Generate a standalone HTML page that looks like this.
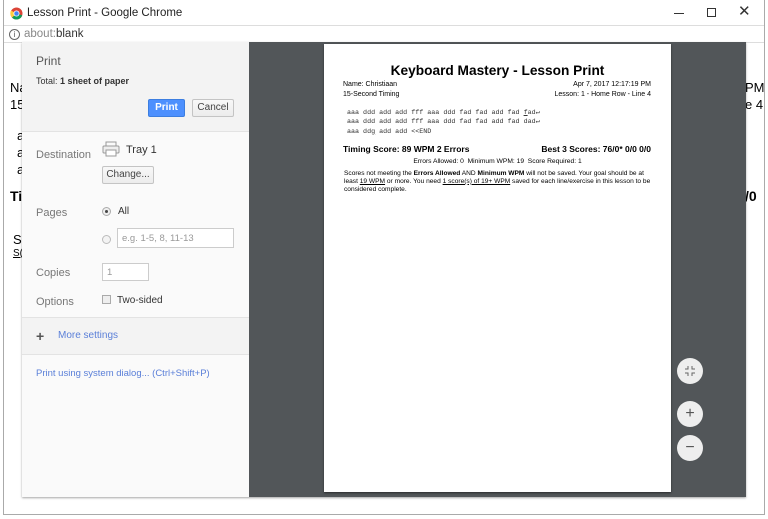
<!DOCTYPE html>
<html><head><style>
*{margin:0;padding:0;box-sizing:border-box}
body{width:768px;height:519px;background:#fff;font-family:"Liberation Sans",sans-serif;position:relative;overflow:hidden}
.abs{position:absolute}
.win{left:3px;top:0;width:762px;height:515px;border:1px solid #aaa;border-top:none;background:#fff}
.t{color:#333;font-size:12px}
.lbl{color:#777;font-size:11px}
.btn{border:1px solid #c4c4c4;border-radius:2px;background:linear-gradient(#f8f8f8,#ececec);font-size:11px;color:#444;text-align:center}
.pg{font-size:7px;color:#000}
.mono{font-family:"Liberation Mono",monospace;font-size:7px;color:#333}
.zb{width:26px;height:26px;border-radius:13px;background:#eee;color:#555;text-align:center;font-size:16px;line-height:25px}
</style></head><body>
<div class="abs win"></div>
<div class="abs" style="left:4px;top:0;width:760px;height:26px;border-bottom:1px solid #ddd;background:#fff"></div>
<svg class="abs" style="left:10px;top:7px" width="13" height="13" viewBox="0 0 26 26"><circle cx="13" cy="13" r="12" fill="#db4437"/><path d="M13 13 L24.4 16.5 A12 12 0 0 1 4 21 Z" fill="#0f9d58"/><path d="M13 13 L4 21 A12 12 0 0 1 2 7 Z" fill="#ffcd40"/><circle cx="13" cy="13" r="6" fill="#fff"/><circle cx="13" cy="13" r="4.5" fill="#4285f4"/></svg>
<div class="abs" style="left:27px;top:7px;font-size:11.5px;color:#222">Lesson Print - Google Chrome</div>
<div class="abs" style="left:674px;top:13px;width:10px;height:1px;background:#333"></div>
<div class="abs" style="left:707px;top:8px;width:9px;height:9px;border:1px solid #333"></div>
<div class="abs" style="left:738px;top:2px;font-size:15px;color:#333">✕</div>
<div class="abs" style="left:4px;top:27px;width:760px;height:16px;border-bottom:1px solid #ddd"></div>
<div class="abs" style="left:9px;top:29px;width:11px;height:11px;border:1px solid #666;border-radius:6px;font-size:8px;text-align:center;line-height:9px;color:#555">i</div>
<div class="abs" style="left:24px;top:28px;font-size:11.5px;color:#888">about:<span style="color:#333">blank</span></div>
<div class="abs" style="left:10px;top:80px;font-size:13px;color:#000">Na</div>
<div class="abs" style="left:10px;top:97px;font-size:13px;color:#000">15</div>
<div class="abs" style="left:17px;top:128px;font-size:13px;color:#000">a</div>
<div class="abs" style="left:17px;top:145px;font-size:13px;color:#000">a</div>
<div class="abs" style="left:17px;top:162px;font-size:13px;color:#000">a</div>
<div class="abs" style="left:10px;top:188px;font-size:14px;font-weight:bold;color:#000">Ti</div>
<div class="abs" style="left:13px;top:232px;font-size:13px;color:#000">S</div>
<div class="abs" style="left:13px;top:248px;font-size:10px;color:#000;text-decoration:underline">S(</div>
<div class="abs" style="left:745px;top:80px;font-size:13px;color:#000">PM</div>
<div class="abs" style="left:745px;top:97px;font-size:13px;color:#000">e 4</div>
<div class="abs" style="left:745px;top:188px;font-size:14px;font-weight:bold;color:#000">/0</div>
<div class="abs" style="left:22px;top:42px;width:724px;height:455px;box-shadow:0 1px 2px rgba(0,0,0,.35);background:#fafafa"></div>
<div class="abs" style="left:22px;top:42px;width:227px;height:90px;background:#f3f3f3;border-bottom:1px solid #e3e3e3"></div>
<div class="abs" style="left:36px;top:54px;font-size:12px;color:#555">Print</div>
<div class="abs" style="left:36px;top:76px;font-size:9px;color:#333">Total: <b>1 sheet of paper</b></div>
<div class="abs" style="left:148px;top:99px;width:37px;height:18px;border:1px solid #3c7ee0;border-radius:2px;background:#4d90fe;color:#fff;font-size:10px;font-weight:bold;text-align:center;line-height:16px">Print</div>
<div class="abs btn" style="left:192px;top:99px;width:42px;height:18px;line-height:16px;font-size:10px">Cancel</div>
<div class="abs lbl" style="left:36px;top:149px">Destination</div>
<svg class="abs" style="left:102px;top:141px" width="18" height="16" viewBox="0 0 18 16"><rect x="4" y="1" width="10" height="4" fill="none" stroke="#999"/><rect x="1" y="5" width="16" height="7" rx="1" fill="#eee" stroke="#999"/><rect x="4" y="9" width="10" height="6" fill="#fff" stroke="#999"/></svg>
<div class="abs t" style="left:126px;top:144px;font-size:11px">Tray 1</div>
<div class="abs btn" style="left:102px;top:166px;width:52px;height:18px;line-height:16px;font-size:10px">Change...</div>
<div class="abs lbl" style="left:36px;top:207px">Pages</div>
<div class="abs" style="left:102px;top:207px;width:9px;height:9px;border:1px solid #aaa;border-radius:5px;background:#eee"></div>
<div class="abs" style="left:105px;top:210px;width:3px;height:3px;border-radius:2px;background:#444"></div>
<div class="abs t" style="left:118px;top:206px;font-size:10px">All</div>
<div class="abs" style="left:102px;top:235px;width:9px;height:9px;border:1px solid #bbb;border-radius:5px;background:#f3f3f3"></div>
<div class="abs" style="left:117px;top:228px;width:117px;height:20px;border:1px solid #ccc;background:#fff;font-size:9.5px;color:#999;padding:4px 0 0 4px">e.g. 1-5, 8, 11-13</div>
<div class="abs lbl" style="left:36px;top:267px">Copies</div>
<div class="abs" style="left:102px;top:263px;width:47px;height:18px;border:1px solid #ccc;background:#fff;font-size:9.5px;color:#999;padding:3px 0 0 4px">1</div>
<div class="abs lbl" style="left:36px;top:296px">Options</div>
<div class="abs" style="left:102px;top:295px;width:9px;height:9px;border:1px solid #aaa;background:#eee"></div>
<div class="abs t" style="left:117px;top:295px;font-size:10px">Two-sided</div>
<div class="abs" style="left:22px;top:317px;width:227px;height:38px;background:#f3f3f3;border-top:1px solid #e3e3e3;border-bottom:1px solid #e3e3e3"></div>
<div class="abs" style="left:36px;top:328px;font-size:14px;font-weight:bold;color:#555">+</div>
<div class="abs" style="left:58px;top:330px;font-size:10px;color:#5a7fd8">More settings</div>
<div class="abs" style="left:36px;top:368px;font-size:9.5px;color:#5a7fd8">Print using system dialog... (Ctrl+Shift+P)</div>
<div class="abs" style="left:249px;top:42px;width:497px;height:455px;background:#525659"></div>
<div class="abs" style="left:324px;top:44px;width:347px;height:448px;background:#fff;box-shadow:0 1px 2px rgba(0,0,0,.5)"></div>
<div class="abs" style="left:324px;top:63px;width:347px;text-align:center;font-size:13.7px;font-weight:bold">Keyboard Mastery - Lesson Print</div>
<div class="abs pg" style="left:343px;top:81px">Name: Christiaan</div>
<div class="abs pg" style="left:343px;top:91px">15-Second Timing</div>
<div class="abs pg" style="left:500px;top:81px;width:151px;text-align:right">Apr 7, 2017 12:17:19 PM</div>
<div class="abs pg" style="left:500px;top:91px;width:151px;text-align:right">Lesson: 1 - Home Row - Line 4</div>
<div class="abs mono" style="left:347px;top:109px;line-height:9.3px;white-space:pre;font-size:6.7px">aaa ddd add add fff aaa ddd fad fad add fad <u>f</u>ad↵
aaa ddd add add fff aaa ddd fad fad add fad dad↵
aaa dd<u>g</u> add add &lt;&lt;END</div>
<div class="abs" style="left:343px;top:144px;font-size:8.5px;font-weight:bold">Timing Score: 89 WPM 2 Errors</div>
<div class="abs" style="left:480px;top:144px;width:171px;text-align:right;font-size:8.5px;font-weight:bold">Best 3 Scores: 76/0* 0/0 0/0</div>
<div class="abs pg" style="left:324px;top:158px;width:347px;text-align:center;font-size:6.7px">Errors Allowed: 0 &nbsp;Minimum WPM: 19 &nbsp;Score Required: 1</div>
<div class="abs pg" style="left:344px;top:170px;width:312px;font-size:6.6px;line-height:7.8px">Scores not meeting the <b>Errors Allowed</b> AND <b>Minimum WPM</b> will not be saved. Your goal should be at least <u>19 WPM</u> or more. You need <u>1 score(s) of 19+ WPM</u> saved for each line/exercise in this lesson to be considered complete.</div>
<div class="abs zb" style="left:677px;top:358px"><svg width="26" height="26" viewBox="0 0 26 26" style="position:absolute;left:0;top:0"><path d="M11 8v3H8M15 8v3h3M11 18v-3H8M15 18v-3h3" fill="none" stroke="#666" stroke-width="1"/></svg></div>
<div class="abs zb" style="left:677px;top:401px">+</div>
<div class="abs zb" style="left:677px;top:435px">−</div>
</body></html>
